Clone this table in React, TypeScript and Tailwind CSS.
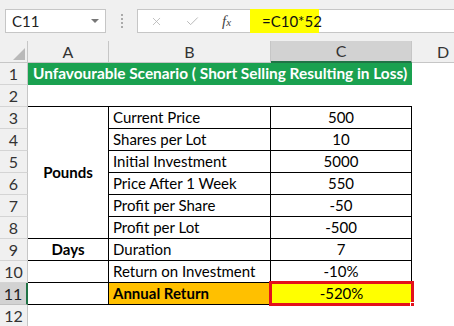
import { X, Check } from 'lucide-react';

const rows = [
  { n: 3, b: 'Current Price', c: '500' },
  { n: 4, b: 'Shares per Lot', c: '10' },
  { n: 5, b: 'Initial Investment', c: '5000' },
  { n: 6, b: 'Price After 1 Week', c: '550' },
  { n: 7, b: 'Profit per Share', c: '-50' },
  { n: 8, b: 'Profit per Lot', c: '-500' },
];

const font = "font-['Lato','Liberation_Sans',sans-serif]";

function RowHead({ n, sel }: { n: number; sel?: boolean }) {
  return (
    <div
      className={
        'flex items-center justify-center border-b border-r text-[16px] ' +
        (sel
          ? 'bg-[#d2d2d2] border-b-[#c0c0c0] border-r-2 border-r-[#217346] text-[#222]'
          : 'bg-[#f0f0f0] border-b-[#d4d4d4] border-r-[#c6c6c6] text-[#333]')
      }
    >
      {n}
    </div>
  );
}

export default function App() {
  return (
    <div className={`w-[454px] h-[326px] overflow-hidden bg-white ${font}`}>
      {/* formula bar */}
      <div className="h-[41px] bg-[#f0f0f0] flex items-center pl-[5px] pt-[1px]">
        <div className="w-[101px] h-[24px] bg-white border border-[#c6c6c6] flex items-center justify-between pl-[6px] pr-[6px] text-[15px] text-[#222]">
          <span>C11</span>
          <span className="w-0 h-0 border-l-[4px] border-r-[4px] border-t-[4px] border-l-transparent border-r-transparent border-t-[#777]" />
        </div>
        <div className="w-[31px] flex flex-col items-center gap-[2px]">
          <span className="w-[2px] h-[2px] bg-[#aaa]" />
          <span className="w-[2px] h-[2px] bg-[#aaa]" />
          <span className="w-[2px] h-[2px] bg-[#aaa]" />
          <span className="w-[2px] h-[2px] bg-[#aaa]" />
        </div>
        <div className="flex-1 h-[24px] bg-white border border-[#c6c6c6] border-r-0 flex items-center">
          <div className="w-[112px] flex items-center pl-[12px] h-full">
            <X size={13} strokeWidth={1.5} className="text-[#b4b4b4]" />
            <Check size={15} strokeWidth={1.5} className="text-[#b4b4b4] ml-[22px]" />
            <span className="ml-[22px] italic font-['Liberation_Serif',serif] text-[15px] text-[#444]">
              f<span className="text-[11px]">x</span>
            </span>
          </div>
          <div className="w-[69px] h-[24px] -my-px bg-[#ffff00] flex items-center pl-[12px] text-[15px] text-[#111]">
            =C10*52
          </div>
        </div>
      </div>

      {/* sheet */}
      <div className="grid grid-cols-[28px_81px_162px_141px_42px] auto-rows-[22px]">
        {/* column headers */}
        <div className="bg-[#f0f0f0] border-r border-b border-[#c6c6c6] flex items-end justify-end pr-[2px] pb-[2px]">
          <svg width="12" height="12" viewBox="0 0 12 12">
            <polygon points="12,0 12,12 0,12" fill="#b9b9b9" />
          </svg>
        </div>
        <div className="bg-[#f0f0f0] border-r border-b border-[#c6c6c6] flex items-center justify-center text-[16px] text-[#333]">A</div>
        <div className="bg-[#f0f0f0] border-r border-b border-[#c6c6c6] flex items-center justify-center text-[16px] text-[#333]">B</div>
        <div className="bg-[#d2d2d2] border-r border-r-[#c6c6c6] border-b-2 border-b-[#217346] flex items-center justify-center text-[16px] text-[#333]">C</div>
        <div className="bg-[#f0f0f0] border-b border-[#c6c6c6] flex items-center pl-[25px] text-[16px] text-[#333]">D</div>

        {/* row 1 */}
        <RowHead n={1} />
        <div className="col-span-3 bg-[#1aa150] text-white font-bold text-[15.4px] flex items-center pl-[5px] whitespace-nowrap">
          Unfavourable Scenario ( Short Selling Resulting in Loss)
        </div>
        <div />

        {/* row 2 */}
        <RowHead n={2} />
        <div className="col-span-3 border-b border-black" />
        <div />

        {/* rows 3-8 */}
        <RowHead n={3} />
        <div className="row-span-6 border-r border-b border-black flex items-center justify-center font-bold text-[15px] text-black">
          Pounds
        </div>
        {rows.map((r, i) => (
          <div key={r.n} className="contents">
            {i > 0 && <RowHead n={r.n} />}
            <div className="border-r border-b border-black flex items-center pl-[4px] text-[15px] text-black">{r.b}</div>
            <div className="border-r border-b border-black flex items-center justify-center text-[15px] text-black">{r.c}</div>
            <div />
          </div>
        ))}

        {/* row 9 */}
        <RowHead n={9} />
        <div className="border-r border-b border-black flex items-center justify-center font-bold text-[15px] text-black">Days</div>
        <div className="border-r border-b border-black flex items-center pl-[4px] text-[15px] text-black">Duration</div>
        <div className="border-r border-b border-black flex items-center justify-center text-[15px] text-black">7</div>
        <div />

        {/* row 10 */}
        <RowHead n={10} />
        <div className="border-r border-b border-black" />
        <div className="border-r border-b border-black flex items-center pl-[4px] text-[15px] text-black">Return on Investment</div>
        <div className="border-r border-b border-black flex items-center justify-center text-[15px] text-black">-10%</div>
        <div />

        {/* row 11 */}
        <RowHead n={11} sel />
        <div className="border-r border-b border-black" />
        <div className="border-r border-b border-black bg-[#ffc000] flex items-center pl-[4px] font-bold text-[15px] text-black">Annual Return</div>
        <div className="relative border-b border-black bg-[#ffff00] flex items-center justify-center text-[15px] text-black">
          -520%
          <span className="absolute -left-[2px] -top-[2px] -right-[2px] -bottom-[2px] border-[3px] border-[#e3121b]" />
          <span className="absolute -right-[3px] -bottom-[3px] w-[5px] h-[5px] bg-[#e3121b] border border-white" />
        </div>
        <div />

        {/* row 12 */}
        <RowHead n={12} />
        <div className="col-span-4" />
      </div>
    </div>
  );
}
